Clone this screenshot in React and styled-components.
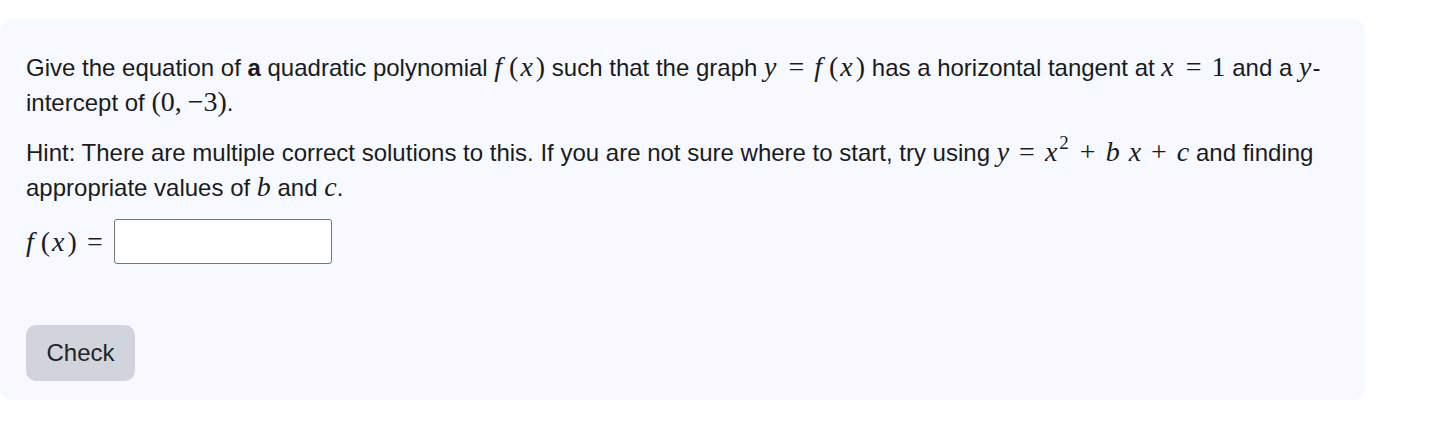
import React from "react";
import styled, { createGlobalStyle } from "styled-components";

const Global = createGlobalStyle`
  html, body { margin: 0; padding: 0; background: #ffffff; }
  body { font-family: "Liberation Sans", Arial, sans-serif; }
`;

const Page = styled.div`
  padding-top: 19px;
  width: 1365px;
`;

const Card = styled.section`
  background: #f6f9ff;
  border-radius: 12px;
  padding: 31px 26px 19px 26px;
  display: flex;
  flex-direction: column;
  align-items: flex-start;
`;

const Para = styled.p`
  margin: 0 0 ${(p) => p.$mb ?? 13}px 0;
  font-size: 24px;
  line-height: 35px;
  color: #1b1b1b;
`;

const Math = styled.span`
  font-family: "Liberation Serif", "Times New Roman", serif;
  font-size: 28px;
  line-height: 1;
  white-space: nowrap;
  color: #1b1b1b;
`;

const V = styled.span`
  font-style: ${(p) => (p.$up ? "normal" : "italic")};
  margin-right: ${(p) => p.$r ?? 0}px;
  margin-left: ${(p) => p.$l ?? 0}px;
`;

const Op = styled.span`
  font-style: normal;
  margin-left: ${(p) => p.$gap ?? 10}px;
  margin-right: ${(p) => p.$right ?? p.$gap ?? 10}px;
`;

const Sup = styled.span`
  font-size: 19px;
  font-style: normal;
  position: relative;
  top: -12px;
  margin-left: 2px;
  margin-right: 1px;
`;

const AnswerRow = styled.div`
  display: flex;
  align-items: center;
  gap: 11px;
`;

const Input = styled.input`
  width: 218px;
  height: 45px;
  box-sizing: border-box;
  border: 1px solid #767676;
  border-radius: 3px;
  background: #ffffff;
  font-size: 24px;
  padding: 0 8px;
  margin: 0;
`;

const CheckButton = styled.button`
  margin-top: 61px;
  width: 109px;
  height: 56px;
  padding: 0;
  border: none;
  border-radius: 10px;
  background: #d1d5db;
  color: #212529;
  font-family: "Liberation Sans", Arial, sans-serif;
  font-size: 24px;
  cursor: pointer;
`;

function FX() {
  return (
    <>
      <V $r={7}>f</V>
      <V $up>(</V>
      <V $l={2} $r={3}>
        x
      </V>
      <V $up>)</V>
    </>
  );
}

export default function App() {
  return (
    <>
      <Global />
      <Page>
        <Card>
          <Para $mb={15}>
            Give the equation of <b>a</b> quadratic polynomial{" "}
            <Math>
              <FX />
            </Math>{" "}
            such that the graph{" "}
            <Math>
              <V $r={2}>y</V>
              <Op>=</Op>
              <FX />
            </Math>{" "}
            has a horizontal tangent at{" "}
            <Math>
              <V $r={2}>x</V>
              <Op>=</Op>
              <V $up>1</V>
            </Math>{" "}
            and a{" "}
            <Math>
              <V $r={1}>y</V>
            </Math>
            -intercept of{" "}
            <Math>
              <V $up>(0,</V>
              <V $up $l={6}>
                −3)
              </V>
            </Math>
            .
          </Para>
          <Para $mb={14}>
            Hint: There are multiple correct solutions to this. If you are not
            sure where to start, try using{" "}
            <Math>
              <V>y</V>
              <Op>=</Op>
              <V>
                x<Sup>2</Sup>
              </V>
              <Op $gap={10}>+</Op>
              <V $r={9}>b</V>
              <V>x</V>
              <Op $gap={10}>+</Op>
              <V>c</V>
            </Math>{" "}
            and finding appropriate values of{" "}
            <Math>
              <V>b</V>
            </Math>{" "}
            and{" "}
            <Math>
              <V>c</V>
            </Math>
            .
          </Para>
          <AnswerRow>
            <Math>
              <FX />
              <Op $gap={10} $right={0}>
                =
              </Op>
            </Math>
            <Input aria-label="f(x)" />
          </AnswerRow>
          <CheckButton>Check</CheckButton>
        </Card>
      </Page>
    </>
  );
}
